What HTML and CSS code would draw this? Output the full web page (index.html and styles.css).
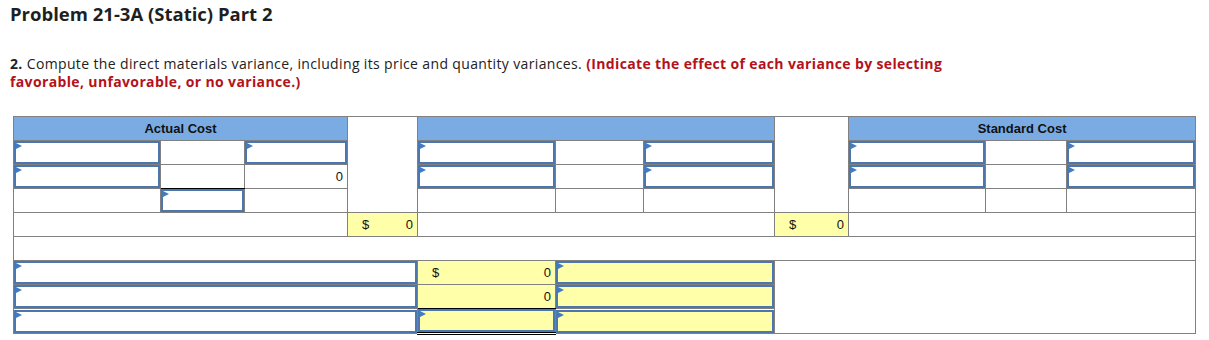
FILE: index.html
```html
<!DOCTYPE html>
<html>
<head>
<meta charset="utf-8">
<link rel="stylesheet" href="styles.css">
</head>
<body>
<h1 class="title">Problem 21-3A (Static) Part 2</h1>
<p class="question"><b>2.</b> Compute the direct materials variance, including its price and quantity variances. <span class="hint">(Indicate the effect of each variance by selecting<br>favorable, unfavorable, or no variance.)</span></p>
<table class="grid">
  <colgroup>
    <col class="c1"><col class="c2"><col class="c3">
    <col class="c4">
    <col class="c5"><col class="c6"><col class="c7">
    <col class="c8">
    <col class="c9"><col class="c10"><col class="c11">
  </colgroup>
  <tr>
    <th colspan="3" class="head">Actual Cost</th>
    <td rowspan="4" class="blank"></td>
    <th colspan="3" class="head"></th>
    <td rowspan="4" class="blank"></td>
    <th colspan="3" class="head">Standard Cost</th>
  </tr>
  <tr>
    <td class="inp"><div class="box"></div></td>
    <td></td>
    <td class="inp"><div class="box"></div></td>
    <td class="inp"><div class="box"></div></td>
    <td></td>
    <td class="inp"><div class="box"></div></td>
    <td class="inp"><div class="box"></div></td>
    <td></td>
    <td class="inp"><div class="box"></div></td>
  </tr>
  <tr>
    <td class="inp"><div class="box"></div></td>
    <td class="ul"></td>
    <td class="num">0</td>
    <td class="inp"><div class="box"></div></td>
    <td></td>
    <td class="inp"><div class="box"></div></td>
    <td class="inp"><div class="box"></div></td>
    <td></td>
    <td class="inp"><div class="box"></div></td>
  </tr>
  <tr>
    <td></td>
    <td class="inp ol"><div class="box"></div></td>
    <td></td>
    <td></td>
    <td></td>
    <td></td>
    <td></td>
    <td></td>
    <td></td>
  </tr>
  <tr>
    <td colspan="3"></td>
    <td class="yel money"><span class="dollar">$</span><span>0</span></td>
    <td colspan="3"></td>
    <td class="yel money"><span class="dollar">$</span><span>0</span></td>
    <td colspan="3"></td>
  </tr>
  <tr>
    <td colspan="11"></td>
  </tr>
  <tr>
    <td colspan="4" class="inp"><div class="box"></div></td>
    <td class="yel money"><span class="dollar">$</span><span>0</span></td>
    <td colspan="2" class="inp"><div class="box yelbox"></div></td>
    <td colspan="4" rowspan="3"></td>
  </tr>
  <tr>
    <td colspan="4" class="inp"><div class="box"></div></td>
    <td class="yel num ul">0</td>
    <td colspan="2" class="inp"><div class="box yelbox"></div></td>
  </tr>
  <tr>
    <td colspan="4" class="inp"><div class="box"></div></td>
    <td class="inp ol dbl"><div class="box yelbox"></div></td>
    <td colspan="2" class="inp"><div class="box yelbox"></div></td>
  </tr>
</table>
</body>
</html>
```
FILE: styles.css
```css
html, body {
  margin: 0;
  padding: 0;
  background: #fff;
}
body {
  padding: 0 0 0 10px;
  font-family: "Open Sans", Lato, sans-serif;
  color: #222;
}
.title {
  margin: 0;
  padding-top: 2px;
  font-size: 18.5px;
  line-height: 24px;
  font-weight: 700;
  color: #1f1f1f;
}
.question {
  margin: 29px 0 0 0;
  font-size: 14px;
  line-height: 18px;
  letter-spacing: 0.36px;
  color: #222;
}
.question b {
  font-weight: 700;
}
.hint {
  color: #b4121b;
  font-weight: 700;
}
.grid {
  margin: 25px 0 0 3px;
  border-collapse: collapse;
  table-layout: fixed;
  width: 1182px;
  font-family: "Liberation Sans Narrow", "Liberation Sans", Arial, sans-serif;
  font-size: 13px;
  color: #111;
}
.c1 { width: 147px; }
.c2 { width: 84px; }
.c3 { width: 103px; }
.c4 { width: 70px; }
.c5 { width: 138px; }
.c6 { width: 88px; }
.c7 { width: 131px; }
.c8 { width: 74px; }
.c9 { width: 137px; }
.c10 { width: 81px; }
.c11 { width: 129px; }
.grid th.head {
  font-family: "Liberation Sans", Arial, sans-serif;
}
.grid tr {
  height: 24px;
}
.grid td, .grid th {
  border: 1px solid #808080;
  padding: 0;
  height: 23px;
  background: #fff;
}
.grid th.head {
  background: #7aace3;
  font-weight: 700;
  text-align: center;
  vertical-align: middle;
}
.grid td.yel {
  background: #ffffaa;
}
.grid td.num {
  text-align: right;
  padding-right: 4px;
}
.grid td.money {
  padding: 0 4px 0 14px;
}
.money {
  white-space: nowrap;
}
.money span {
  display: inline-block;
}
.money .dollar {
  float: left;
}
.money span:last-child {
  float: right;
}
.grid td.ul {
  border-bottom: 1px solid #000;
}
.grid td.ol {
  border-top: 1px solid #000;
}
.grid td.dbl {
  border-bottom: 3px double #000;
}
.box {
  position: relative;
  box-sizing: border-box;
  height: 23px;
  width: 100%;
  border: 2px solid #4b76ae;
  background: #fff;
}
.box.yelbox {
  background: #ffffaa;
}
.box::before {
  content: "";
  position: absolute;
  left: 0;
  top: 0;
  border-left: 6px solid #3f7bc6;
  border-top: 3px solid transparent;
  border-bottom: 3px solid transparent;
}
```
